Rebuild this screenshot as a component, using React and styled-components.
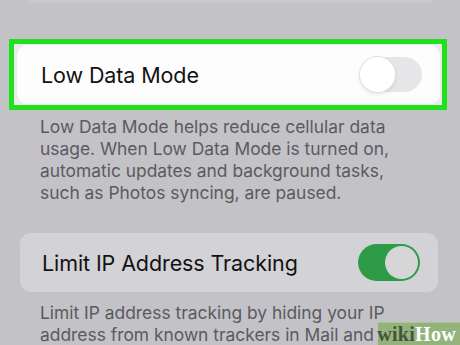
import React from 'react';
import styled, { createGlobalStyle } from 'styled-components';

const GlobalStyle = createGlobalStyle`
  html, body {
    margin: 0;
    padding: 0;
    background: #c3c2c7;
  }
  body {
    width: 460px;
    height: 345px;
    overflow: hidden;
    font-family: Inter, "Noto Sans", "Liberation Sans", sans-serif;
  }
`;

const Screen = styled.div`
  position: relative;
  width: 460px;
  height: 345px;
  overflow: hidden;
  background: #c3c2c7;
`;

const PrevCardEdge = styled.div`
  height: 3px;
  margin: 0 28px;
  background: #cac9ce;
  border-radius: 0 0 10px 10px;
`;

const Highlight = styled.div`
  margin: 36px 13px 0 9px;
  border: 5px solid #1fe21c;
  background: #ececee;
  padding: 1px 2px 1px 3px;
`;

const Card = styled.div`
  display: flex;
  align-items: center;
  justify-content: space-between;
  height: ${p => p.$height}px;
  padding: 0 ${p => p.$padRight}px 0 ${p => p.$padLeft}px;
  margin: ${p => p.$margin || 0};
  background: ${p => p.$bg};
  border-radius: 11px;
`;

const Label = styled.span`
  font-size: 21.5px;
  color: #121212;
  letter-spacing: -0.1px;
`;

const Toggle = styled.div`
  position: relative;
  width: 62px;
  height: ${p => (p.$on ? 37 : 35)}px;
  border-radius: 20px;
  background: ${p => (p.$on ? '#2d9b48' : '#e6e6e8')};
  flex-shrink: 0;
`;

const Knob = styled.div`
  position: absolute;
  top: ${p => (p.$on ? 2 : 0)}px;
  ${p => (p.$on ? 'right: 2px;' : 'left: 0;')}
  width: ${p => (p.$on ? 33 : 35)}px;
  height: ${p => (p.$on ? 33 : 35)}px;
  border-radius: 50%;
  box-sizing: border-box;
  background: ${p => (p.$on ? '#d6d6d6' : '#ffffff')};
  box-shadow: ${p => (p.$on ? 'none' : '0 0 0 1px #e1e1e3, 0 2px 4px rgba(0,0,0,0.12)')};
`;

const Footnote = styled.p`
  margin: ${p => p.$margin};
  padding: 0 40px 0 40px;
  font-size: 17.4px;
  line-height: 22px;
  color: #5b5a60;
`;

const WikiBadge = styled.div`
  position: absolute;
  right: 0;
  bottom: 0;
  width: 82px;
  height: 23px;
  display: flex;
  align-items: center;
  justify-content: flex-end;
  padding-right: 4px;
  box-sizing: border-box;
  background: #93b37c;
  border-top: 1px solid #a8c794;
  font-family: "Liberation Serif", "DejaVu Serif", serif;
  font-weight: bold;
  font-size: 20px;
  letter-spacing: 0.3px;
`;

const WikiPart = styled.span`
  color: ${p => p.$color};
`;

function Switch({ on }) {
  return (
    <Toggle $on={on}>
      <Knob $on={on} />
    </Toggle>
  );
}

export default function App() {
  return (
    <Screen>
      <GlobalStyle />
      <PrevCardEdge />
      <Highlight>
        <Card $height={59} $padLeft={24} $padRight={18} $bg="#fdfdfd">
          <Label>Low Data Mode</Label>
          <Switch on={false} />
        </Card>
      </Highlight>
      <Footnote $margin="6px 0 0 0">
        Low Data Mode helps reduce cellular data usage. When Low Data Mode is turned on,
        automatic updates and background tasks, such as Photos syncing, are paused.
      </Footnote>
      <Card $height={59} $padLeft={22} $padRight={18} $bg="#d3d2d6" $margin="29px 22px 0 20px">
        <Label>Limit IP Address Tracking</Label>
        <Switch on />
      </Card>
      <Footnote $margin="10px 0 0 0">
        Limit IP address tracking by hiding your IP address from known trackers in Mail and
      </Footnote>
      <WikiBadge>
        <WikiPart $color="#46553c">wiki</WikiPart>
        <WikiPart $color="#ffffff">How</WikiPart>
      </WikiBadge>
    </Screen>
  );
}
